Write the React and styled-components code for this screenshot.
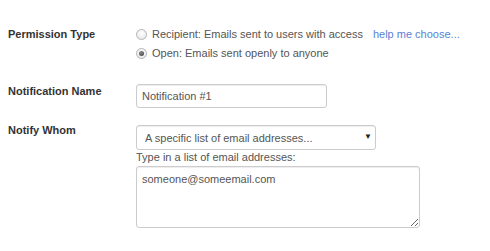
import React, { useState } from "react";
import styled, { createGlobalStyle } from "styled-components";

const GlobalStyle = createGlobalStyle`
  body {
    margin: 0;
    background: #ffffff;
    font-family: "Liberation Sans", Arial, sans-serif;
    font-size: 11px;
    color: #555555;
  }
`;

function App() {
  const [perm, setPerm] = useState("open");
  const [name, setName] = useState("Notification #1");
  const [whom, setWhom] = useState("list");
  const [emails, setEmails] = useState("someone@someemail.com");

  return (
    <Page>
      <GlobalStyle />
      <Row $gap={21}>
        <Label $top={2}>Permission Type</Label>
        <Options>
          <Option>
            <RadioInput
              type="radio"
              name="perm"
              checked={perm === "recipient"}
              onChange={() => setPerm("recipient")}
            />
            <Dot $on={perm === "recipient"} />
            Recipient: Emails sent to users with access
            <Help href="#">help me choose...</Help>
          </Option>
          <Option>
            <RadioInput
              type="radio"
              name="perm"
              checked={perm === "open"}
              onChange={() => setPerm("open")}
            />
            <Dot $on={perm === "open"} />
            Open: Emails sent openly to anyone
          </Option>
        </Options>
      </Row>

      <Row $gap={15}>
        <Label>Notification Name</Label>
        <TextInput value={name} onChange={(e) => setName(e.target.value)} />
      </Row>

      <Row>
        <Label>Notify Whom</Label>
        <Field>
          <SelectWrap>
            <Select value={whom} onChange={(e) => setWhom(e.target.value)}>
              <option value="list">A specific list of email addresses...</option>
              <option value="all">All users</option>
            </Select>
            <Caret>▼</Caret>
          </SelectWrap>
          <Hint>Type in a list of email addresses:</Hint>
          <TextArea
            value={emails}
            onChange={(e) => setEmails(e.target.value)}
            spellCheck={false}
          />
        </Field>
      </Row>
    </Page>
  );
}

export default App;

const Page = styled.div`
  padding: 25px 0 0 8px;
`;

const Row = styled.div`
  display: flex;
  align-items: flex-start;
  margin-bottom: ${(p) => p.$gap || 0}px;
`;

const Label = styled.div`
  width: 128px;
  flex-shrink: 0;
  padding-top: ${(p) => p.$top || 0}px;
  line-height: 14px;
  font-weight: bold;
  color: #333333;
`;

const Options = styled.div`
  display: flex;
  flex-direction: column;
`;

const Option = styled.label`
  display: flex;
  align-items: center;
  height: 19px;
  line-height: 19px;
  color: #555555;
  cursor: pointer;
`;

const RadioInput = styled.input`
  display: none;
`;

const Dot = styled.span`
  width: 9px;
  height: 9px;
  margin-right: 5px;
  border-radius: 50%;
  border: 1px solid #b4b4b4;
  background: radial-gradient(circle at 50% 35%, #ffffff 0%, #ececec 70%, #dcdcdc 100%);
  position: relative;
  flex-shrink: 0;

  &::after {
    content: "";
    display: ${(p) => (p.$on ? "block" : "none")};
    position: absolute;
    left: 2px;
    top: 2px;
    width: 5px;
    height: 5px;
    border-radius: 50%;
    background: radial-gradient(circle at 40% 35%, #8a8a8a 0%, #3d3d3d 100%);
  }
`;

const Help = styled.a`
  margin-left: 10px;
  color: #5a7fd4;
  text-decoration: none;
`;

const TextInput = styled.input`
  box-sizing: border-box;
  width: 191px;
  height: 24px;
  padding: 0 5px;
  border: 1px solid #cccccc;
  border-radius: 3px;
  box-shadow: inset 0 1px 1px rgba(0, 0, 0, 0.075);
  font: inherit;
  color: #555555;
  outline: none;
`;

const Field = styled.div`
  display: flex;
  flex-direction: column;
  padding-top: 2px;
`;

const SelectWrap = styled.div`
  position: relative;
  width: 240px;
`;

const Select = styled.select`
  appearance: none;
  box-sizing: border-box;
  width: 240px;
  height: 25px;
  padding: 0 20px 0 8px;
  border: 1px solid #cccccc;
  border-radius: 3px;
  background: #ffffff;
  box-shadow: inset 0 1px 1px rgba(0, 0, 0, 0.075);
  font: inherit;
  color: #555555;
  outline: none;
`;

const Caret = styled.span`
  position: absolute;
  right: 4px;
  top: 7px;
  font-size: 8px;
  line-height: 10px;
  color: #222222;
  pointer-events: none;
`;

const Hint = styled.div`
  line-height: 14px;
  color: #555555;
  margin-bottom: 2px;
`;

const TextArea = styled.textarea`
  box-sizing: border-box;
  width: 284px;
  height: 62px;
  padding: 5px 5px;
  border: 1px solid #cccccc;
  border-radius: 3px;
  box-shadow: inset 0 1px 1px rgba(0, 0, 0, 0.075);
  font: inherit;
  line-height: 14px;
  color: #555555;
  outline: none;
`;
